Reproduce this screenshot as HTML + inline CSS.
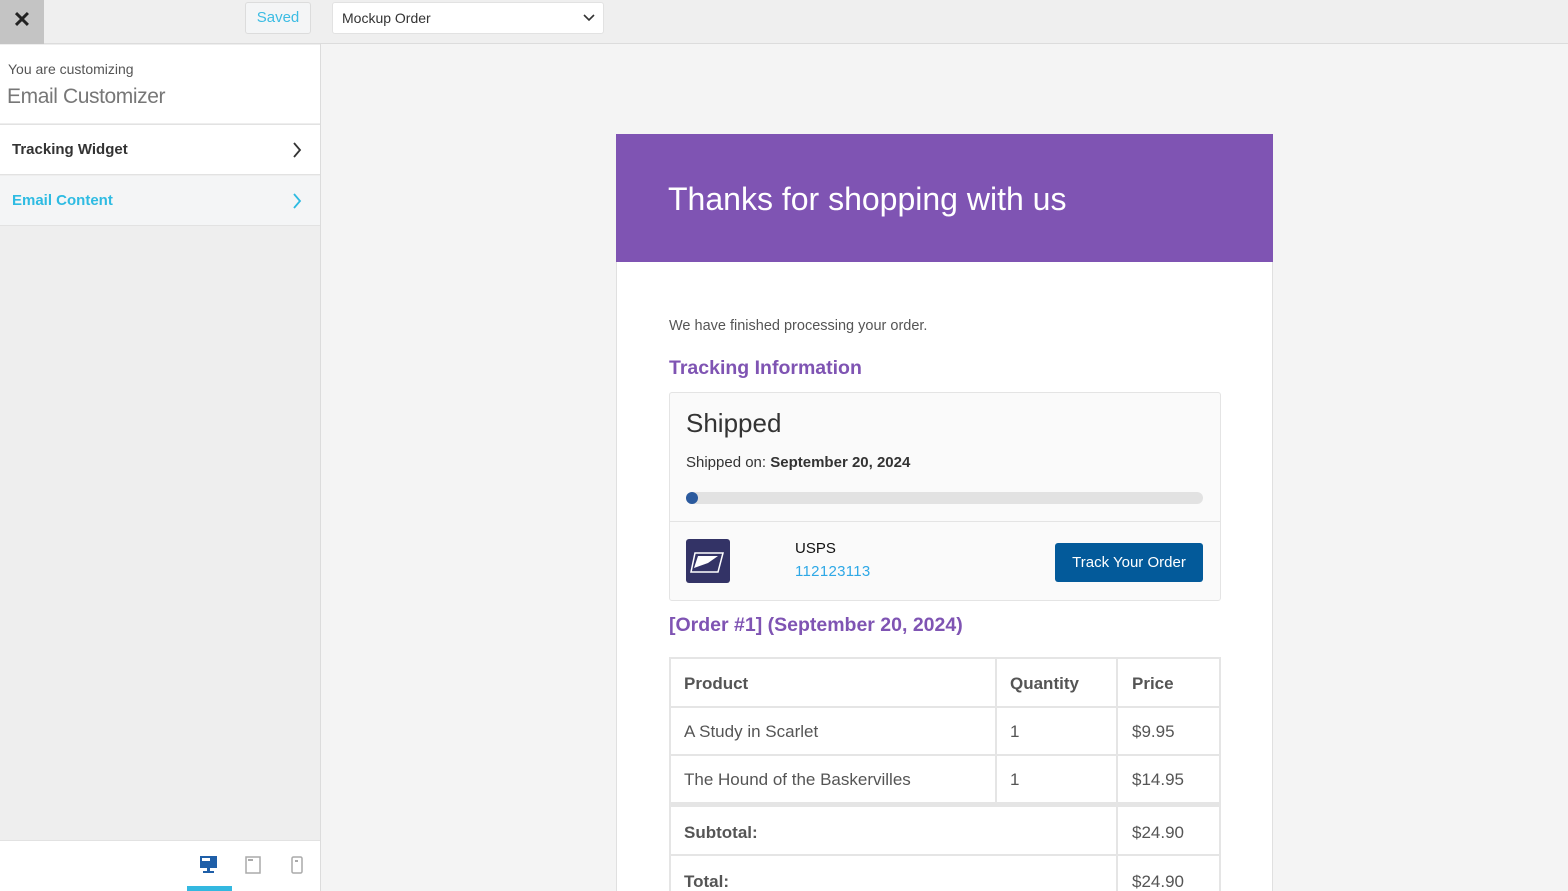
<!DOCTYPE html>
<html style="overflow:hidden;height:891px"><head><style>
*{box-sizing:border-box;margin:0;padding:0}
body{width:1568px;height:891px;overflow:hidden;background:#f4f4f4;font-family:"Liberation Sans",sans-serif;position:relative}
.a{position:absolute}
</style></head><body>
<div class="a" style="left:0;top:0;width:1568px;height:44px;background:#efefef;border-bottom:1px solid #dcdcdc"></div>
<div class="a" style="left:0;top:0;width:44px;height:44px;background:#c4c4c4;font-size:22px;text-align:center;line-height:40px;color:#222;font-weight:bold">✕</div>
<div class="a" style="left:245px;top:2px;width:66px;height:32px;border:1px solid #dcdcdc;background:#f4f5f6;border-radius:3px;color:#3cbce3;font-size:15px;text-align:center;line-height:30px">Saved</div>
<div class="a" style="left:332px;top:2px;width:272px;height:32px;background:#fff;border:1px solid #e2e2e2;border-radius:3px;font-size:14px;color:#333;padding-left:9px;line-height:31px">Mockup Order
<svg class="a" style="right:8px;top:10px" width="12" height="10"><path d="M1 2l5 5 5-5" stroke="#333" stroke-width="1.6" fill="none"/></svg></div>
<div class="a" style="left:0;top:44px;width:321px;height:847px;background:#eeeeee;border-right:1px solid #dcdcdc"></div>
<div class="a" style="left:0;top:45px;width:320px;height:78px;background:#fff"></div>
<div class="a" style="left:8px;top:61px;font-size:14px;color:#555">You are customizing</div>
<div class="a" style="left:7px;top:85px;font-size:21px;color:#777;letter-spacing:-0.4px">Email Customizer</div>
<div class="a" style="left:0;top:124px;width:320px;height:51px;background:#fff;border-top:1px solid #e2e2e2;border-bottom:1px solid #e2e2e2;font-size:15px;font-weight:bold;color:#333;padding:16px 12px">Tracking Widget
<svg class="a" style="left:292px;top:17px" width="10" height="16"><path d="M2 1l6 7-6 7" stroke="#333" stroke-width="1.8" fill="none"/></svg></div>
<div class="a" style="left:0;top:176px;width:320px;height:50px;background:#f4f5f6;border-bottom:1px solid #e2e2e2;font-size:15px;font-weight:bold;color:#2ebbe2;padding:16px 12px">Email Content
<svg class="a" style="left:292px;top:17px" width="10" height="16"><path d="M2 1l6 7-6 7" stroke="#2ebbe2" stroke-width="1.8" fill="none"/></svg></div>
<div class="a" style="left:0;top:840px;width:320px;height:51px;background:#fff;border-top:1px solid #e2e2e2"></div>
<svg class="a" style="left:199px;top:855px" width="20" height="20"><rect x="1" y="1" width="17" height="12" fill="#1f5fa8"/><rect x="3" y="3" width="8" height="3" fill="#fff"/><rect x="8" y="13" width="3" height="3" fill="#1f5fa8"/><rect x="4" y="16" width="11" height="2" fill="#1f5fa8"/></svg>
<div class="a" style="left:187px;top:886px;width:45px;height:5px;background:#33b8e0"></div>
<svg class="a" style="left:245px;top:856px" width="17" height="18"><rect x="1" y="1" width="14" height="16" fill="none" stroke="#aaa" stroke-width="1.5"/><path d="M3 3h5v2H3z" fill="#aaa"/></svg>
<svg class="a" style="left:291px;top:856px" width="12" height="18"><rect x="1" y="1" width="10" height="16" rx="1.5" fill="none" stroke="#aaa" stroke-width="1.5"/><path d="M4 4h3v2H4z" fill="#aaa"/></svg>

<div class="a" style="left:616px;top:134px;width:657px;height:757px;background:#fff;border:1px solid #e0e0e0;border-bottom:none"></div>
<div class="a" style="left:616px;top:134px;width:657px;height:128px;background:#7f54b3"></div>
<div class="a" style="left:668px;top:181px;font-size:32px;color:#fff">Thanks for shopping with us</div>
<div class="a" style="left:669px;top:318px;font-size:14.5px;color:#555">We have finished processing your order.</div>
<div class="a" style="left:669px;top:357px;font-size:19.5px;color:#7f54b3;font-weight:bold">Tracking Information</div>
<div class="a" style="left:669px;top:392px;width:552px;height:209px;background:#fafafa;border:1px solid #e4e4e4;border-radius:3px"></div>
<div class="a" style="left:669px;top:521px;width:552px;height:1px;background:#e4e4e4"></div>
<div class="a" style="left:686px;top:408px;font-size:26px;color:#333">Shipped</div>
<div class="a" style="left:686px;top:454px;font-size:15px;color:#333">Shipped on: <b>September 20, 2024</b></div>
<div class="a" style="left:686px;top:492px;width:517px;height:12px;background:#e2e2e2;border-radius:6px"></div>
<div class="a" style="left:686px;top:492px;width:12px;height:12px;background:#2b5a9e;border-radius:50%"></div>
<svg class="a" style="left:686px;top:539px" width="44" height="44"><rect width="44" height="44" rx="3" fill="#333366"/><path d="M9 14h28l-5 19H5z" fill="none" stroke="#fff" stroke-width="1.5"/><path d="M12 17h20l-10 7 -14 5z" fill="#fff"/></svg>
<div class="a" style="left:795px;top:540px;font-size:15px;color:#111">USPS</div>
<div class="a" style="left:795px;top:563px;font-size:15px;color:#2ea8e6;letter-spacing:0.3px">112123113</div>
<div class="a" style="left:1055px;top:543px;width:148px;height:39px;background:#035a9a;border-radius:3px;color:#fff;font-size:15px;text-align:center;line-height:39px">Track Your Order</div>
<div class="a" style="left:669px;top:614px;font-size:19.5px;color:#7f54b3;font-weight:bold">[Order #1] (September 20, 2024)</div>
<div class="a" style="left:669px;top:657px;width:552px;height:240px;border:2px solid #e5e5e5"></div>
<div class="a" style="left:995px;top:657px;width:2px;height:146px;background:#e5e5e5"></div>
<div class="a" style="left:1116px;top:657px;width:2px;height:240px;background:#e5e5e5"></div>
<div class="a" style="left:669px;top:706px;width:552px;height:2px;background:#e5e5e5"></div>
<div class="a" style="left:669px;top:754px;width:552px;height:2px;background:#e5e5e5"></div>
<div class="a" style="left:669px;top:802px;width:552px;height:5px;background:#e5e5e5"></div>
<div class="a" style="left:669px;top:854px;width:552px;height:2px;background:#e5e5e5"></div>
<div class="a" style="left:684px;top:674px;font-size:17px;font-weight:bold;color:#555">Product</div>
<div class="a" style="left:1010px;top:674px;font-size:17px;font-weight:bold;color:#555">Quantity</div>
<div class="a" style="left:1132px;top:674px;font-size:17px;font-weight:bold;color:#555">Price</div>
<div class="a" style="left:684px;top:722px;font-size:17px;color:#555">A Study in Scarlet</div>
<div class="a" style="left:1010px;top:722px;font-size:17px;color:#555">1</div>
<div class="a" style="left:1132px;top:722px;font-size:17px;color:#555">$9.95</div>
<div class="a" style="left:684px;top:770px;font-size:17px;color:#555">The Hound of the Baskervilles</div>
<div class="a" style="left:1010px;top:770px;font-size:17px;color:#555">1</div>
<div class="a" style="left:1132px;top:770px;font-size:17px;color:#555">$14.95</div>
<div class="a" style="left:684px;top:823px;font-size:17px;font-weight:bold;color:#555">Subtotal:</div>
<div class="a" style="left:1132px;top:823px;font-size:17px;color:#555">$24.90</div>
<div class="a" style="left:684px;top:872px;font-size:17px;font-weight:bold;color:#555">Total:</div>
<div class="a" style="left:1132px;top:872px;font-size:17px;color:#555">$24.90</div>
</body></html>
